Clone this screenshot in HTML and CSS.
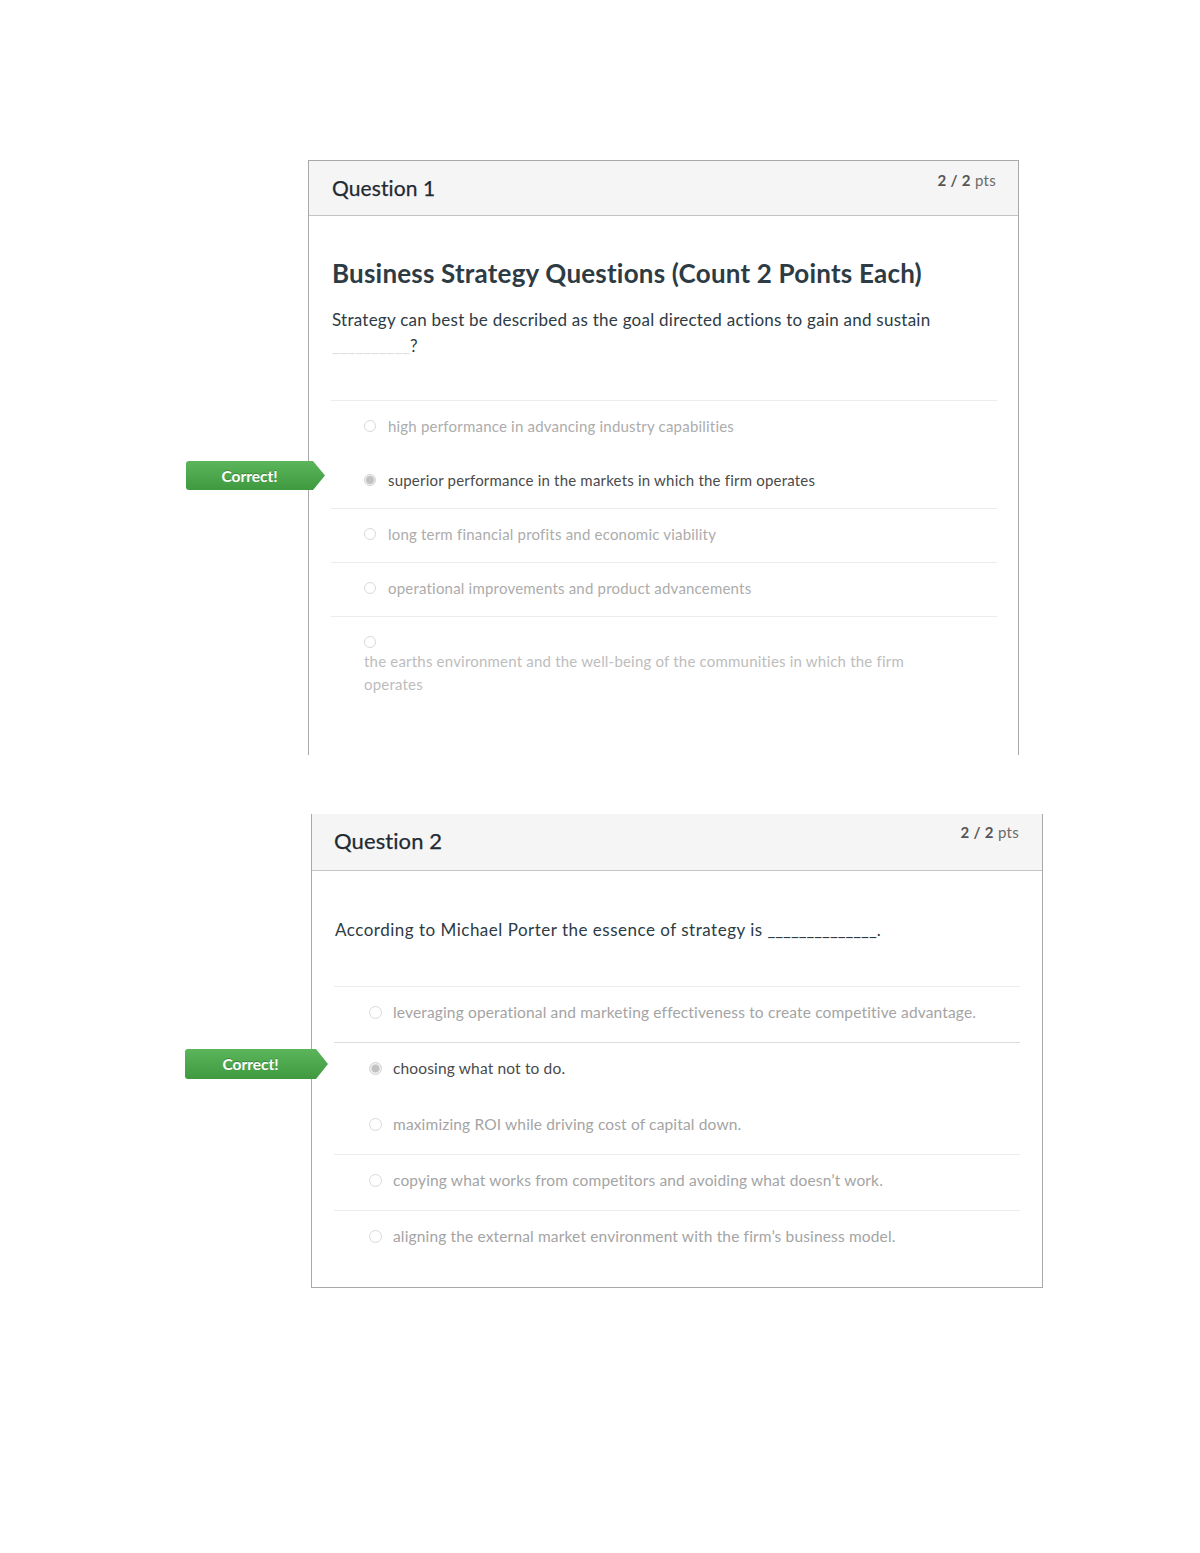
FILE: index.html
```html
<!DOCTYPE html>
<html lang="en">
<head>
<meta charset="utf-8">
<title>Quiz results</title>
<link rel="stylesheet" href="styles.css">
</head>
<body>
<main class="page">
  <section class="card card-q1">
    <header class="card-header">
      <h2 class="q-title">Question 1</h2>
      <div class="q-pts"><b>2 / 2</b> pts</div>
    </header>
    <div class="card-body">
      <h1 class="q-heading">Business Strategy Questions (Count 2 Points Each)</h1>
      <p class="q-text">Strategy can best be described as the goal directed actions to gain and sustain<br><span class="blank">__________</span>?</p>
      <ul class="answers">
        <li class="answer no-sep"><span class="radio"></span><span class="a-text">high performance in advancing industry capabilities</span></li>
        <li class="answer selected"><span class="badge">Correct!</span><span class="radio"></span><span class="a-text">superior performance in the markets in which the firm operates</span></li>
        <li class="answer"><span class="radio"></span><span class="a-text">long term financial profits and economic viability</span></li>
        <li class="answer"><span class="radio"></span><span class="a-text">operational improvements and product advancements</span></li>
        <li class="answer answer-stacked no-sep"><span class="radio"></span><span class="a-text">the earths environment and the well-being of the communities in which the firm<br>operates</span></li>
      </ul>
    </div>
  </section>

  <section class="card card-q2">
    <header class="card-header">
      <h2 class="q-title">Question 2</h2>
      <div class="q-pts"><b>2 / 2</b> pts</div>
    </header>
    <div class="card-body">
      <p class="q-text">According to Michael Porter the essence of strategy is <span class="blank-line">______________</span>.</p>
      <ul class="answers">
        <li class="answer sep-dark"><span class="radio"></span><span class="a-text">leveraging operational and marketing effectiveness to create competitive advantage.</span></li>
        <li class="answer selected no-sep"><span class="badge">Correct!</span><span class="radio"></span><span class="a-text">choosing what not to do.</span></li>
        <li class="answer"><span class="radio"></span><span class="a-text">maximizing ROI while driving cost of capital down.</span></li>
        <li class="answer"><span class="radio"></span><span class="a-text">copying what works from competitors and avoiding what doesn’t work.</span></li>
        <li class="answer no-sep"><span class="radio"></span><span class="a-text">aligning the external market environment with the firm’s business model.</span></li>
      </ul>
    </div>
  </section>
</main>
</body>
</html>
```

FILE: styles.css
```css
* {
  box-sizing: border-box;
}

html, body {
  margin: 0;
  padding: 0;
  background: #ffffff;
}

body {
  font-family: Lato, "Open Sans", "Liberation Sans", sans-serif;
  color: #2d3b45;
}

.page {
  padding-top: 160px;
  display: flex;
  flex-direction: column;
}

/* ---------- card ---------- */
.card {
  border: 1px solid #a9a9a9;
  background: #fff;
}

.card-q1 {
  margin-left: 308px;
  width: 711px;
  border-bottom: none;
  height: 595px;
}

.card-q2 {
  margin-left: 311px;
  margin-top: 59px;
  width: 732px;
  border-top: none;
}

.card-header {
  display: flex;
  justify-content: space-between;
  align-items: flex-start;
  background: #f5f5f5;
  border-bottom: 1px solid #c4c4c4;
  height: 55px;
  padding: 0 22px 0 23px;
}

.card-q2 .card-header {
  height: 57px;
  padding: 0 23px 0 22px;
}

.q-title {
  margin: 14px 0 0;
  font-size: 21px;
  line-height: 26px;
  font-weight: 400;
  color: #1f2a33;
  letter-spacing: 0.1px;
  -webkit-text-stroke: 0.25px #1f2a33;
}

.card-q2 .q-title {
  font-size: 22px;
}

.q-pts {
  margin-top: 9px;
  font-size: 15px;
  line-height: 20px;
  color: #6b6b6b;
  letter-spacing: 0.3px;
}

.card-q2 .q-pts {
  margin-top: 8px;
}

.q-pts b {
  font-weight: 700;
  color: #555;
}

.card-body {
  padding: 0 21px 0 23px;
}

.card-q2 .card-body {
  padding: 0 22px 20px 22px;
}

.q-heading {
  margin: 40px 0 0 0;
  font-size: 26px;
  line-height: 34px;
  font-weight: 700;
  color: #2d3b45;
  letter-spacing: 0.2px;
}

.q-text {
  margin: 17px 0 41px 0;
  font-size: 17px;
  line-height: 26px;
  color: #2d3b45;
  letter-spacing: 0.25px;
}

.card-q2 .q-text {
  margin: 46px 0 43px 1px;
  letter-spacing: 0.5px;
}

.blank {
  color: #e0e0e0;
  letter-spacing: 0;
}

.blank-line {
  letter-spacing: 0;
}

/* ---------- answers ---------- */
.answers {
  list-style: none;
  margin: 0 0 0 -1px;
  padding: 0;
  border-top: 1px solid #ececec;
}

.card-q2 .answers {
  margin-left: 0;
}

.answer {
  position: relative;
  display: flex;
  align-items: center;
  gap: 12px;
  height: 54px;
  padding-left: 33px;
  padding-bottom: 3px;
  border-bottom: 1px solid #ececec;
  font-size: 15px;
  letter-spacing: 0.2px;
  color: #acacac;
}

.card-q2 .answer {
  height: 56px;
  padding-left: 35px;
  padding-bottom: 5px;
  gap: 11px;
  font-size: 15.5px;
  letter-spacing: 0.15px;
  color: #a4a4a4;
}

.answer.no-sep {
  border-bottom-color: transparent;
}

.answer.sep-dark {
  border-bottom-color: #dcdcdc;
}

.answer.selected {
  color: #4a4a4a;
}

.answer-stacked {
  display: block;
  height: auto;
  padding-top: 19px;
  padding-bottom: 0;
  line-height: 23px;
  color: #bdbdbd;
}

.answer-stacked .radio {
  display: block;
  margin-bottom: 2px;
}

.radio {
  flex: 0 0 auto;
  width: 12px;
  height: 12px;
  border-radius: 50%;
  border: 1px solid #dadada;
  background: #fff;
}

.card-q2 .radio {
  width: 13px;
  height: 13px;
}

.selected .radio {
  background: radial-gradient(circle, #c2c2c2 0 3.5px, #efefef 4.5px);
  border-color: #d2d2d2;
}

/* ---------- correct badge ---------- */
.badge {
  position: absolute;
  left: -145px;
  top: 6px;
  width: 139px;
  height: 29px;
  padding-right: 12px;
  display: flex;
  align-items: center;
  justify-content: center;
  background: linear-gradient(#5bb65b, #3f9a3f);
  border-radius: 3px 0 0 3px;
  clip-path: polygon(0 0, calc(100% - 12px) 0, 100% 50%, calc(100% - 12px) 100%, 0 100%);
  color: #fff;
  font-size: 15.5px;
  font-weight: 700;
  text-shadow: 0 -1px 0 rgba(0, 0, 0, 0.25);
  letter-spacing: 0;
}

.card-q2 .badge {
  left: -149px;
  width: 143px;
  height: 30px;
}
```
